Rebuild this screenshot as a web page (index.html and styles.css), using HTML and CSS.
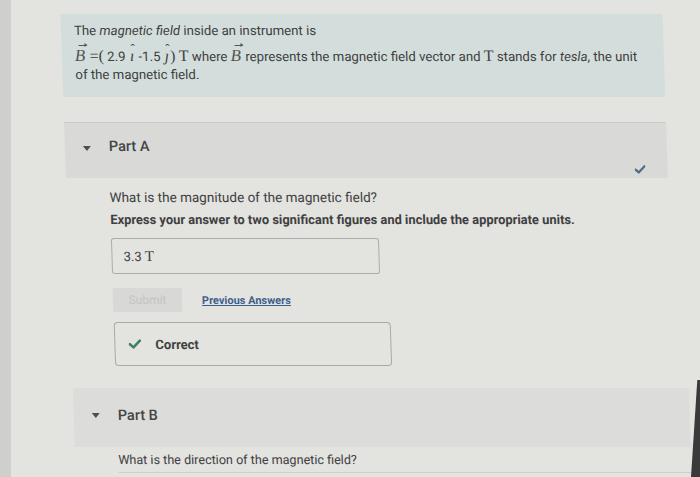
FILE: index.html
```html
<!DOCTYPE html>
<html lang="en">
<head>
<meta charset="utf-8">
<title>Magnetic field</title>
<link rel="stylesheet" href="styles.css">
</head>
<body>
<main class="page">
  <section class="intro">
    <p>The <em>magnetic field</em> inside an instrument is<br><span class="vec">B</span> <span class="m">=(</span> 2.9 <span class="hat">ı</span> -1.5 <span class="hat">ȷ</span><span class="m">)</span> <span class="m">T</span> where <span class="vec">B</span> represents the magnetic field vector and <span class="m">T</span> stands for <em>tesla</em>, the unit<br>of the magnetic field.</p>
  </section>

  <section class="part">
    <header class="part-head">
      <span class="caret"></span>
      <h2 class="part-title">Part A</h2>
      <svg class="done" width="11" height="9" viewBox="0 0 11 9"><path d="M1 4.6 L4 7.4 L10 1.2" fill="none" stroke="#4f6b8c" stroke-width="2.2" stroke-linecap="round" stroke-linejoin="round"/></svg>
    </header>
    <div class="part-body">
      <p class="q">What is the magnitude of the magnetic field?</p>
      <p class="instr">Express your answer to two significant figures and include the appropriate units.</p>
      <div class="answer">3.3&nbsp;<span class="m unit">T</span></div>
      <div class="actions">
        <button class="submit" type="button">Submit</button>
        <a class="prev" href="#">Previous Answers</a>
      </div>
      <div class="feedback">
        <svg width="13" height="10" viewBox="0 0 13 10"><path d="M1.5 5.2 L5 8.4 L11.5 1.6" fill="none" stroke="#3f8262" stroke-width="2.6" stroke-linecap="round" stroke-linejoin="round"/></svg>
        <span>Correct</span>
      </div>
    </div>
  </section>

  <section class="part part-b">
    <header class="part-head">
      <span class="caret"></span>
      <h2 class="part-title">Part B</h2>
    </header>
    <div class="part-body">
      <p class="q q-b">What is the direction of the magnetic field?</p>
    </div>
  </section>
</main>
</body>
</html>
```

FILE: styles.css
```css
html, body {
  margin: 0;
  height: 100%;
}

body {
  position: relative;
  background: #e3e3e0;
  border-left: 11px solid #cfcfcd;
  box-sizing: border-box;
  font-family: Roboto, "Liberation Sans", sans-serif;
  color: #404040;
  overflow: hidden;
}

/* dark monitor bezel visible at the lower right edge of the photo */
body::after {
  content: "";
  position: fixed;
  top: 380px;
  right: 0;
  bottom: 0;
  width: 9px;
  background: #3a3a3a;
  clip-path: polygon(100% 0, 100% 100%, 0 100%, 70% 0);
}

.page {
  width: 602px;
  margin-left: 49px;
  padding-top: 14px;
  transform: skewX(1.9deg);
  transform-origin: 0 0;
}

/* intro */
.intro {
  background: #d3dedc;
  padding: 8px 4px 13px 13px;
}

.intro p {
  margin: 0;
  font-size: 13.2px;
  line-height: 18px;
  white-space: nowrap;
}

.intro em {
  font-style: italic;
}

.m {
  font-family: "Liberation Serif", "DejaVu Serif", serif;
  font-size: 16px;
}

.vec {
  position: relative;
  display: inline-block;
  padding-top: 7px;
  margin-right: 1px;
  font-family: "Liberation Serif", "DejaVu Serif", serif;
  font-style: italic;
  font-size: 17px;
  line-height: 18px;
  color: #555;
}

.vec::before {
  content: "";
  position: absolute;
  top: 5px;
  left: 4px;
  width: 8px;
  border-top: 1px solid #555;
}

.vec::after {
  content: "";
  position: absolute;
  top: 3px;
  left: 10px;
  border-left: 3px solid #555;
  border-top: 2.5px solid transparent;
  border-bottom: 2.5px solid transparent;
}

.hat {
  position: relative;
  display: inline-block;
  margin: 0 1px;
  font-family: "Liberation Serif", "DejaVu Serif", serif;
  font-style: italic;
  font-size: 16px;
}

.hat::after {
  content: "\02C6";
  position: absolute;
  top: -7px;
  left: 1px;
  font-style: normal;
  font-size: 13px;
}

/* parts */
.part {
  margin-top: 25px;
}

.part-head {
  display: flex;
  align-items: center;
  height: 56px;
  box-sizing: border-box;
  padding-left: 18px;
  padding-right: 22px;
  background: #d9d9d7;
  border-top: 1px solid #cbcbc9;
}

.caret {
  width: 0;
  height: 0;
  border-left: 4px solid transparent;
  border-right: 4px solid transparent;
  border-top: 5px solid #4f4f4f;
  margin-top: -5px;
}

.part-title {
  margin: -9px 0 0 18px;
  font-size: 14.5px;
  font-weight: 500;
  color: #444;
}

.done {
  margin-left: auto;
  align-self: flex-end;
  margin-bottom: 4px;
}

.part-body {
  padding-left: 43px;
}

.q {
  margin: 10px 0 0;
  font-size: 13.5px;
  line-height: 18px;
}

.instr {
  margin: 5px 0 0;
  font-size: 12.9px;
  font-weight: bold;
  line-height: 18px;
}

.answer {
  display: flex;
  align-items: center;
  width: 268px;
  height: 36px;
  margin-top: 9px;
  box-sizing: border-box;
  padding-left: 11px;
  border: 1px solid #acacaa;
  border-radius: 3px;
  font-size: 13px;
}

.unit {
  font-size: 15px;
}

.actions {
  display: flex;
  align-items: center;
  gap: 20px;
  margin-top: 14px;
}

.submit {
  width: 69px;
  height: 24px;
  border: 0;
  background: #d8d8d6;
  color: #c4c4c2;
  font-family: Roboto, "Liberation Sans", sans-serif;
  font-size: 12px;
}

.prev {
  font-size: 11px;
  font-weight: bold;
  color: #3d5f8b;
  text-decoration: underline;
}

.feedback {
  display: flex;
  align-items: center;
  gap: 14px;
  width: 277px;
  height: 44px;
  margin-top: 10px;
  box-sizing: border-box;
  padding-left: 13px;
  border: 1px solid #a9a9a7;
  border-radius: 4px;
  font-size: 13px;
  font-weight: bold;
  color: #3f3f3f;
}

.part-b {
  margin-top: 22px;
}

.part-b .part-head {
  height: 59px;
  margin-right: -14px;
  border-top: 0;
  background: #dcdcda;
}

.part-b .part-title {
  margin-top: -4px;
}

.q-b {
  margin-top: 4px;
  margin-right: -14px;
  padding-bottom: 3px;
  font-size: 12.6px;
  border-bottom: 1px solid #cfcfcd;
}
```
